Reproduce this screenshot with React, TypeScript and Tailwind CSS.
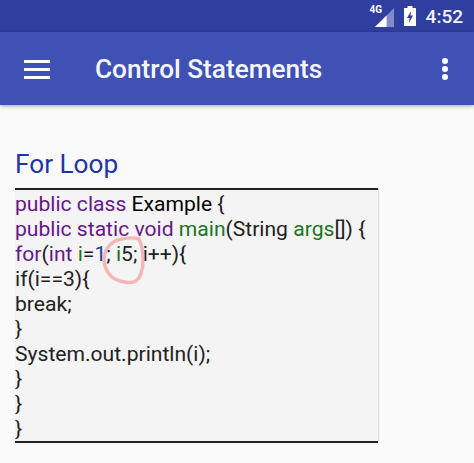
const purple = "text-[#67178a]";
const green = "text-[#1c7420]";

function StatusIcons() {
  return (
    <div className="flex items-center">
      <div className="relative h-[21px] w-[24px]">
        <span className="absolute left-0 top-[-2px] text-[10px] font-bold leading-[12px] text-white">4G</span>
        <svg viewBox="0 0 18 18" className="absolute left-[5px] top-[2px] h-[19px] w-[19px]">
          <path d="M18 0V18H0Z" fill="#fff" fillOpacity="0.4" />
          <path d="M11 7V18H0Z" fill="#fff" />
        </svg>
      </div>
      <svg viewBox="0 0 12 20" className="ml-[10px] h-[20px] w-[12px]">
        <path d="M3.5 0h5v2H12v18H0V2h3.5Z" fill="#fff" />
        <path d="M7 5 3 12h2.5L5 17l4-7.5H6.5Z" fill="#303f9f" />
      </svg>
      <span className="ml-[10px] text-[19px] font-medium leading-none text-[#f2f3fa]">4:52</span>
    </div>
  );
}

export default function App() {
  return (
    <div className="h-[463px] w-[474px] overflow-hidden bg-[#fafafa] font-['Roboto',sans-serif]">
      <div className="flex h-[32px] items-center justify-end bg-[#303f9f] pr-[11px]">
        <StatusIcons />
      </div>
      <header className="flex h-[73px] items-center bg-[#3f51b5] shadow-[0_1px_4px_rgba(0,0,0,0.35)]">
        <svg viewBox="0 0 26 20" className="ml-[24px] h-[20px] w-[26px]" fill="#fff">
          <rect y="1" width="26" height="3" />
          <rect y="9" width="26" height="3" />
          <rect y="17" width="26" height="3" />
        </svg>
        <h1 className="ml-[45px] pt-px text-[26.2px] font-medium leading-none text-[#f6f7fc]">Control Statements</h1>
        <svg viewBox="0 0 8 24" className="ml-auto mr-[25px] h-[24px] w-[8px]" fill="#fff">
          <circle cx="4" cy="4" r="3" />
          <circle cx="4" cy="12" r="3" />
          <circle cx="4" cy="20" r="3" />
        </svg>
      </header>
      <main className="px-[15px] pt-[44px]">
        <h2 className="text-[26.2px] leading-[31px] text-[#1f35a5]">For Loop</h2>
        <div className="relative mt-[8px] w-[363px] border-y-2 border-[#222] bg-[#f4f4f4] pt-px text-[21.1px] leading-[25px] text-[#222] shadow-[1px_0_1px_rgba(0,0,0,0.12)]">
          <div>
            <span className={purple}>public class</span> <span className="text-black">Example</span> {"{"}
          </div>
          <div>
            <span className={purple}>public static void</span> <span className={green}>main</span>(String{" "}
            <span className={green}>args</span>[]) {"{"}
          </div>
          <div>
            <span className={purple}>for</span>(<span className={purple}>int</span> <span className={green}>i</span>=
            <span className="text-[#1a3fa5]">1</span>; <span className={green}>i</span>5; i++){"{"}
          </div>
          <div>if(i==3){"{"}</div>
          <div>break;</div>
          <div>{"}"}</div>
          <div>System.out.println(i);</div>
          <div>{"}"}</div>
          <div>{"}"}</div>
          <div>{"}"}</div>
          <svg viewBox="0 0 44 52" className="absolute left-[86px] top-[45px] h-[52px] w-[44px]" fill="none">
            <path
              d="M38 4C32 2 22 3 14 6C7 10 3 17 3 25C3 33 8 41 14 44C20 47 30 49 35 46C40 42 42 34 42 25C42 17 41 10 38 4"
              stroke="#f49c9c"
              strokeOpacity="0.7"
              strokeWidth="3.5"
              strokeLinecap="round"
            />
          </svg>
        </div>
      </main>
    </div>
  );
}
